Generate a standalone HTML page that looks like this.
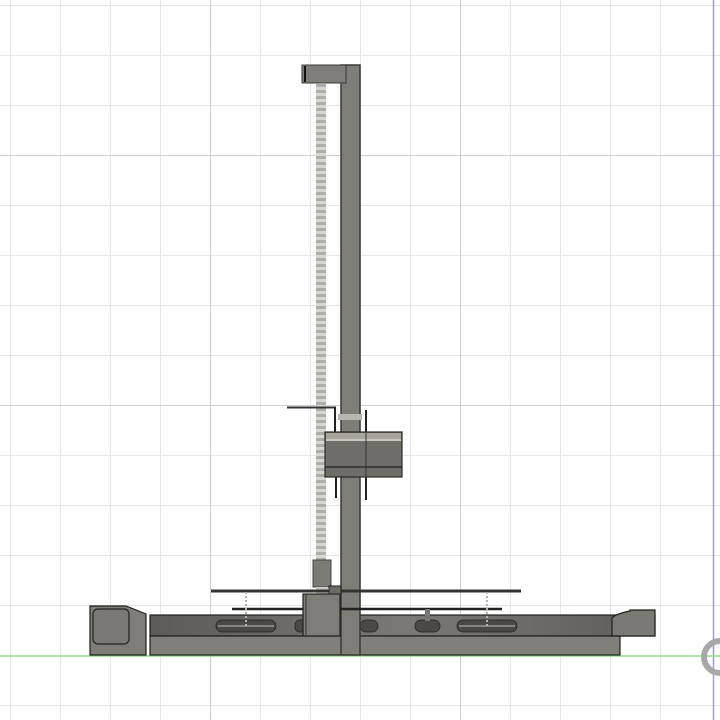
<!DOCTYPE html>
<html><head><style>html,body{margin:0;padding:0;background:#fff;width:720px;height:720px;overflow:hidden}</style></head>
<body>
<svg width="720" height="720" viewBox="0 0 720 720" xmlns="http://www.w3.org/2000/svg">
<defs>
<pattern id="scr" width="10" height="6" patternUnits="userSpaceOnUse"><rect width="10" height="6" fill="#d6d6d2"/><rect y="0" width="10" height="3" fill="#aeaea8"/></pattern>
<linearGradient id="rail" x1="0" x2="1"><stop offset="0" stop-color="#5c5b56"/><stop offset="0.5" stop-color="#7a7973"/><stop offset="1" stop-color="#5e5d58"/></linearGradient>
</defs>
<g stroke="#e6e6e6" stroke-width="1">
<path d="M10.5 0V720M60.5 0V720M110.5 0V720M160.5 0V720M260.5 0V720M310.5 0V720M360.5 0V720M410.5 0V720M510.5 0V720M560.5 0V720M610.5 0V720M660.5 0V720"/>
<path d="M0 5.5H720M0 55.5H720M0 105.5H720M0 205.5H720M0 255.5H720M0 305.5H720M0 355.5H720M0 455.5H720M0 505.5H720M0 555.5H720M0 605.5H720M0 705.5H720"/>
</g>
<g stroke="#cfcfcf" stroke-width="1">
<path d="M210.5 0V720M460.5 0V720M0 155.5H720M0 405.5H720"/>
</g>
<line x1="713.5" y1="0" x2="713.5" y2="720" stroke="#9b9bf0" stroke-width="1.5"/>
<line x1="0" y1="656" x2="720" y2="656" stroke="#8ee08e" stroke-width="1.5"/>
<circle cx="720" cy="657" r="16" fill="none" stroke="#a8a8a8" stroke-width="6"/>

<rect x="316" y="84" width="10" height="478" fill="url(#scr)"/>

<!-- base -->
<rect x="150" y="615" width="505" height="21" fill="url(#rail)" stroke="#1e1e1c" stroke-width="1.2"/>
<rect x="150" y="636" width="470" height="19" fill="#807f79" stroke="#1e1e1c" stroke-width="1.2"/>
<path d="M90 606 H126 L146 614 V655 H90 Z" fill="#7e7d77" stroke="#1e1e1c" stroke-width="1.2"/>
<rect x="93" y="609" width="36" height="35" rx="5" fill="#7a7973" stroke="#222" stroke-width="1.2"/>
<path d="M612 636 V618 Q615 614 630 611 V610 H655 V636 Z" fill="#7a7973" stroke="#1e1e1c" stroke-width="1.2"/>

<g fill="#4a4945" stroke="#222" stroke-width="0.8">
<rect x="216" y="620" width="60" height="12" rx="6"/>
<rect x="457" y="620" width="60" height="12" rx="6"/>
<rect x="415" y="620" width="25" height="12" rx="6"/>
<rect x="360" y="620" width="18" height="12" rx="6"/>
<rect x="295" y="620" width="12" height="12" rx="5"/>
</g>
<g stroke="#aaa8a0" stroke-width="1.2">
<line x1="218" y1="626" x2="274" y2="626"/><line x1="459" y1="626" x2="515" y2="626"/>
</g>

<!-- column -->
<rect x="341" y="65" width="19" height="590" fill="#7e7d77" stroke="#3a3a36" stroke-width="1.5"/>
<rect x="302" y="65" width="44" height="18" fill="#7e7d77" stroke="#3a3a36" stroke-width="1"/>
<line x1="305" y1="66" x2="305" y2="82" stroke="#111" stroke-width="2"/>

<line x1="287" y1="407.5" x2="336" y2="407.5" stroke="#333" stroke-width="2"/>
<line x1="335" y1="407" x2="335" y2="432" stroke="#222" stroke-width="2"/>
<line x1="366" y1="410" x2="366" y2="500" stroke="#222" stroke-width="2"/>
<line x1="336" y1="476" x2="336" y2="498" stroke="#222" stroke-width="2"/>
<rect x="338" y="414" width="24" height="6" fill="#b8b6ae"/>
<rect x="325" y="432" width="77" height="45" fill="#6e6d68" stroke="#2a2a27" stroke-width="1.2"/>
<rect x="326" y="433" width="75" height="6" fill="#a8a69c"/>
<line x1="326" y1="440" x2="401" y2="440" stroke="#e8e6dc" stroke-width="1.5"/>
<line x1="325" y1="467" x2="402" y2="467" stroke="#222" stroke-width="1.2"/>
<line x1="366" y1="433" x2="366" y2="476" stroke="#333" stroke-width="1"/>

<rect x="313" y="560" width="18" height="27" fill="#7b7a74" stroke="#444" stroke-width="1"/>
<rect x="316" y="587" width="12" height="7" fill="#c9c7bf"/>

<line x1="211" y1="591" x2="521" y2="591" stroke="#333" stroke-width="3"/>
<line x1="232" y1="609" x2="502" y2="609" stroke="#222" stroke-width="2.5"/>
<line x1="246" y1="592" x2="246" y2="626" stroke="#b5b3ab" stroke-width="2" stroke-dasharray="2 2"/>
<line x1="487" y1="592" x2="487" y2="626" stroke="#b5b3ab" stroke-width="2" stroke-dasharray="2 2"/>
<rect x="425" y="609" width="5" height="12" fill="#777"/>

<rect x="303" y="594" width="37" height="42" fill="#7e7d77" stroke="#1e1e1c" stroke-width="1.2"/>
<line x1="306" y1="595" x2="306" y2="635" stroke="#333" stroke-width="1"/>
<rect x="329" y="586" width="12" height="8" fill="#6a6964" stroke="#222" stroke-width="1"/>
</svg>
</body></html>
